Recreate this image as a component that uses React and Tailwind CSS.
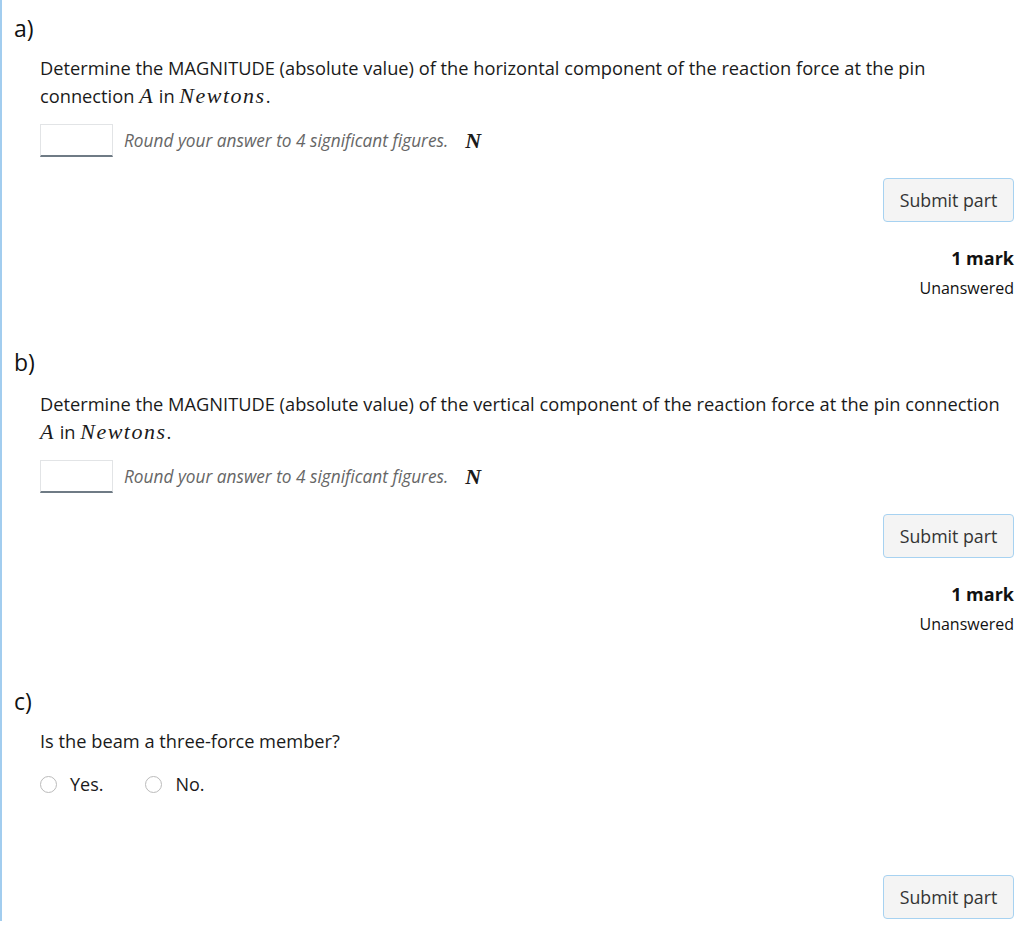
import React from 'react'

const font = { fontFamily: '"Open Sans", Lato, sans-serif' }

function M({ children, bold }) {
    // MathJax-ish inline math
    return (
        <span className={`font-['Liberation_Serif',serif] italic text-[22px] tracking-[1.5px] ${bold ? 'font-bold' : 'font-normal'}`}>{children}</span>
    )
}

function AnswerBox() {
    return (
        <div className="flex items-center gap-[11px] h-[33px]">
            <div className="w-[73px] h-[33px] border border-[#e2e4e6] border-b-2 border-b-[#6f7b85] bg-white" />
            <span className="italic text-[#666] text-[17.25px]">Round your answer to 4 significant figures.</span>
            <span className="ml-[6px]"><M bold>N</M></span>
        </div>
    )
}

function SubmitButton() {
    return (
        <div className="flex justify-end">
            <button className="h-[44px] w-[131px] rounded-[4px] border border-[#a7d2f1] bg-[#f4f4f4] text-[#333] text-[17.75px]">
                Submit part
            </button>
        </div>
    )
}

function Marks() {
    return (
        <div className="flex flex-col items-end text-[16px] leading-[30px] text-[#111]">
            <span className="font-bold text-[18px]">1 mark</span>
            <span>Unanswered</span>
        </div>
    )
}

function Part({ label, children }) {
    return (
        <div>
            <p className="pl-[12px] text-[23px] leading-[28px] text-[#111]">{label}</p>
            <div className="pl-[38px]">{children}</div>
        </div>
    )
}

export default function App() {
    return (
        <div className="w-[1024px] h-[928px] bg-white" style={font}>
            <div className="border-l-2 border-[#a2cdef] h-[921px] pr-[10px] pt-[14px] text-[#1a1a1a]">
                <Part label="a)">
                    <p className="mt-[12px] text-[18.25px] leading-[28px]">
                        Determine the MAGNITUDE (absolute value) of the horizontal component of the reaction force at the pin<br />
                        connection <M>A</M> in <M>Newtons</M>.
                    </p>
                    <div className="mt-[14px]"><AnswerBox /></div>
                    <div className="mt-[21px]"><SubmitButton /></div>
                    <div className="mt-[21px]"><Marks /></div>
                </Part>
                <div className="mt-[45px]">
                    <Part label="b)">
                        <p className="mt-[14px] text-[18.25px] leading-[28px]">
                            Determine the MAGNITUDE (absolute value) of the vertical component of the reaction force at the pin connection<br />
                            <M>A</M> in <M>Newtons</M>.
                        </p>
                        <div className="mt-[14px]"><AnswerBox /></div>
                        <div className="mt-[21px]"><SubmitButton /></div>
                        <div className="mt-[21px]"><Marks /></div>
                    </Part>
                </div>
                <div className="mt-[48px]">
                    <Part label="c)">
                        <p className="mt-[12px] text-[18.25px] leading-[28px]">Is the beam a three-force member?</p>
                        <div className="mt-[16px] flex items-center text-[18px]">
                            <label className="flex items-center gap-[13px] mr-[42px]">
                                <span className="w-[17px] h-[17px] rounded-full border border-[#bbb] bg-white" />
                                Yes.
                            </label>
                            <label className="flex items-center gap-[13px]">
                                <span className="w-[17px] h-[17px] rounded-full border border-[#bbb] bg-white" />
                                No.
                            </label>
                        </div>
                        <div className="mt-[77px]"><SubmitButton /></div>
                    </Part>
                </div>
            </div>
        </div>
    )
}
